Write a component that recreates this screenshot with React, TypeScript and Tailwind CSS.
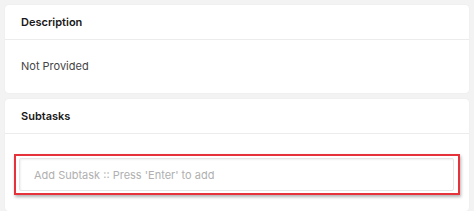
import { useState } from "react";

// Task detail panels: description + subtasks input

export default function App() {
  const [subtask, setSubtask] = useState("");

  return (
    <div
      className="h-[211px] w-[474px] overflow-hidden bg-[#f3f3f4] px-[5px] pt-[5px] flex flex-col gap-[6px]"
      style={{ fontFamily: "Inter, 'Noto Sans', sans-serif" }}
    >
      {/* Description */}
      <div className="bg-white rounded-[4px] shadow-[0_0_2px_rgba(0,0,0,0.06)] shrink-0">
        <div className="h-[35px] px-[16px] flex items-center border-b border-[#ececec]">
          <h3 className="text-[11px] font-semibold text-[#181818]">Description</h3>
        </div>
        <div className="h-[53px] px-[16px] flex items-center">
          <p className="text-[11px] text-[#454545]">Not Provided</p>
        </div>
      </div>

      {/* Subtasks */}
      <div className="bg-white rounded-[4px] shadow-[0_0_2px_rgba(0,0,0,0.06)] flex-1">
        <div className="h-[35px] px-[16px] flex items-center border-b border-[#ececec]">
          <h3 className="text-[11px] font-semibold text-[#181818]">Subtasks</h3>
        </div>
        <div className="pt-[20px] pl-[9px] pr-[9px]">
          <div className="border-[2px] border-[#e6323b] shadow-[1px_2px_3px_rgba(0,0,0,0.3)] pl-[3px] pr-[4px] py-[2px]">
            <input
              value={subtask}
              onChange={(e) => setSubtask(e.target.value)}
              placeholder="Add Subtask :: Press 'Enter' to add"
              className="w-full h-[33px] px-[14px] text-[11px] text-[#333] placeholder:text-[#b0b0b0] border border-[#e6e6e6] rounded-[2px] shadow-[inset_1px_1px_2px_rgba(0,0,0,0.06)] outline-none"
            />
          </div>
        </div>
      </div>
    </div>
  );
}
